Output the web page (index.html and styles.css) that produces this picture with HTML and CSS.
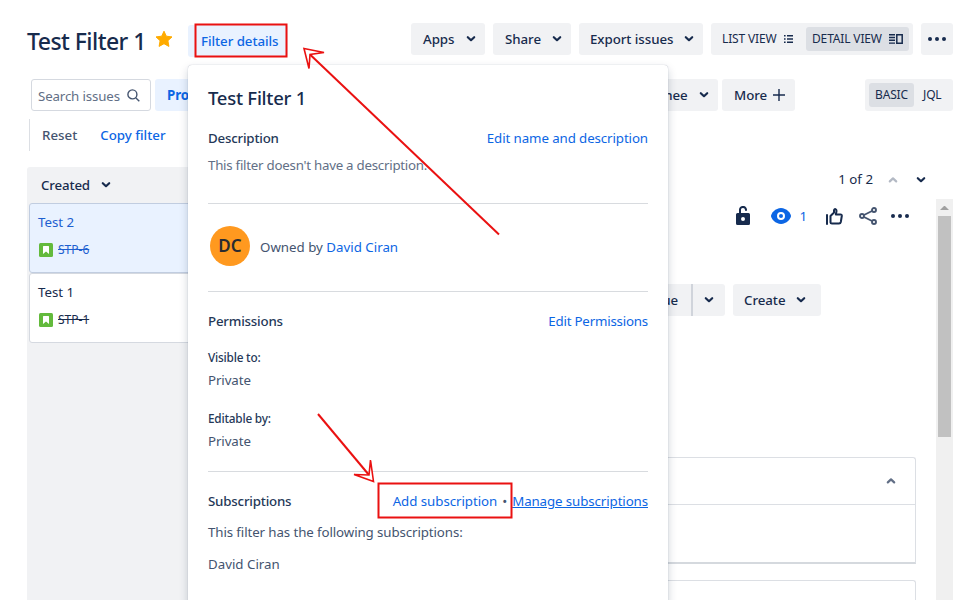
FILE: index.html
```
<!DOCTYPE html>
<html lang="en">
<head>
  <title>Test Filter 1</title>
  <meta charset="UTF-8">
  <link rel="stylesheet" href="styles.css">
</head>
<body>
  <svg class="defs">
    <symbol id="down" viewBox="0 0 10 8"><path d="M1.8 2.2 5 5.2 8.2 2.2" fill="none" stroke="currentColor" stroke-width="2.2" stroke-linecap="round" stroke-linejoin="round"/></symbol>
    <symbol id="up" viewBox="0 0 10 8"><path d="M1.8 5.4 5 2.4 8.2 5.4" fill="none" stroke="currentColor" stroke-width="2.2" stroke-linecap="round" stroke-linejoin="round"/></symbol>
    <symbol id="dots" viewBox="0 0 18 4"><circle cx="2" cy="2" r="2" fill="currentColor"/><circle cx="9" cy="2" r="2" fill="currentColor"/><circle cx="16" cy="2" r="2" fill="currentColor"/></symbol>
    <symbol id="story" viewBox="0 0 14 14"><rect width="14" height="14" rx="1.5" fill="#63ba3c"/><path d="M4 3.6Q4 3 4.6 3H9.4Q10 3 10 3.6V11L7 8.4 4 11Z" fill="#fff"/></symbol>
  </svg>

  <header class="header">
    <h1>Test Filter 1</h1>
    <svg class="star" viewBox="0 0 18 18"><path d="M9 1.2 11.3 6.2 17 6.9 12.9 10.7 13.9 16.4 9 13.7 4.1 16.4 5.1 10.7 1 6.9 6.7 6.2Z" fill="#ffab00" stroke="#ffab00" stroke-linejoin="round"/></svg>
    <div class="details">
      <button class="btn details-btn">Filter details</button>
      <section class="popup">
        <h2>Test Filter 1</h2>
        <div class="row"><h3>Description</h3><a>Edit name and description</a></div>
        <p class="empty">This filter doesn't have a description.</p>
        <hr>
        <div class="owner">
          <span class="avatar">DC</span>
          <p>Owned by <a>David Ciran</a></p>
        </div>
        <hr>
        <div class="row permissions"><h3>Permissions</h3><a class="edit-permissions">Edit Permissions</a></div>
        <h4>Visible to:</h4>
        <p class="value">Private</p>
        <h4>Editable by:</h4>
        <p class="value">Private</p>
        <hr>
        <div class="row subscriptions">
          <h3>Subscriptions</h3>
          <div class="links"><a class="add">Add subscription</a><span>•</span><a class="manage">Manage subscriptions</a></div>
        </div>
        <p class="following">This filter has the following subscriptions:</p>
        <p class="subscriber">David Ciran</p>
      </section>
    </div>
    <div class="actions">
      <button class="btn apps">Apps<svg class="chev"><use href="#down"/></svg></button>
      <button class="btn share">Share<svg class="chev"><use href="#down"/></svg></button>
      <button class="btn export">Export issues<svg class="chev"><use href="#down"/></svg></button>
      <div class="toggle view-toggle">
        <span class="list-view">LIST VIEW
          <svg width="10" height="10" viewBox="0 0 10 10" fill="currentColor"><path d="M0 1h1.6v1.5H0zM3 1h6v1.5H3zM0 4.3h1.6v1.5H0zM3 4.3h6v1.5H3zM0 7.6h1.6v1.5H0zM3 7.6h6v1.5H3z"/></svg>
        </span>
        <span class="selected detail-view">DETAIL VIEW
          <svg width="14" height="10" viewBox="0 0 14 10" fill="currentColor"><path d="M0 0h6v1.4H0zM0 2.8h6v1.4H0zM0 5.6h6V7H0zM0 8.4h6v1.4H0z"/><path d="M7.8.8h5.4v8.4H7.8z" fill="none" stroke="currentColor" stroke-width="1.5"/></svg>
        </span>
      </div>
      <button class="btn more-actions"><svg width="18" height="4"><use href="#dots"/></svg></button>
    </div>
  </header>

  <div class="filters">
    <div class="search">Search issues
      <svg width="13" height="13" viewBox="0 0 13 13" fill="none" stroke="#44546f" stroke-width="1.4"><circle cx="5.4" cy="5.4" r="4.5"/><path d="m8.7 8.7 3.6 3.6"/></svg>
    </div>
    <button class="btn project">Project</button>
    <button class="btn assignee">Assignee<svg class="chev"><use href="#down"/></svg></button>
    <button class="btn more">More<svg width="12" height="12" viewBox="0 0 12 12" stroke="currentColor" stroke-width="1.4"><path d="M6 0v12M0 6h12"/></svg></button>
    <div class="toggle mode-toggle"><span class="selected">BASIC</span><span class="jql">JQL</span></div>
  </div>
  <div class="filter-links"><span>Reset</span><a>Copy filter</a></div>

  <main>
    <aside class="issues">
      <div class="sort">Created<svg class="chev"><use href="#down"/></svg></div>
      <div class="issue active">
        <p>Test 2</p>
        <div class="key"><svg width="14" height="14"><use href="#story"/></svg><s>STP-6</s></div>
      </div>
      <div class="issue">
        <p>Test 1</p>
        <div class="key"><svg width="14" height="14"><use href="#story"/></svg><s>STP-1</s></div>
      </div>
    </aside>
    <section class="detail">
      <div class="pager"><span>1 of 2</span><svg class="chev prev"><use href="#up"/></svg><svg class="chev"><use href="#down"/></svg></div>
      <div class="scroll">
        <div class="content">
          <div class="tools">
            <svg class="lock" width="14" height="19" viewBox="0 0 14 19"><path d="M4 8V4.200a3 3 0 0 1 6-.6V4.800" fill="none" stroke="currentColor" stroke-width="2"/><path fill="currentColor" fill-rule="evenodd" d="M1.5 7h11Q14 7 14 8.500V17.500Q14 19 12.500 19H1.500Q0 19 0 17.500V8.500Q0 7 1.500 7ZM7 11a2 2 0 1 0 0 4 2 2 0 0 0 0-4Z"/></svg>
            <svg class="eye" width="20" height="16" viewBox="0 0 20 16"><path d="M10 0C4.500 0 0 5.500 0 8s4.500 8 10 8 10-5.500 10-8-4.500-8-10-8Z" fill="#0c66e4"/><circle cx="10" cy="8" r="3" fill="none" stroke="#fff" stroke-width="2"/></svg>
            <span class="watchers">1</span>
            <svg class="like" width="17" height="17" viewBox="0 0 17 17" fill="none" stroke="currentColor" stroke-width="2" stroke-linejoin="round"><path d="M1 7v9" stroke-linecap="round"/><path d="M4.500 14.500V8L8 4.500V2.200Q8.300.8 9.500 1.200 10.800 1.700 10.400 3.700L9.800 6.500H14.500Q16 6.500 15.800 8L14.800 14Q14.500 15.500 13 15.500H6Q4.500 15.500 4.500 14.500Z"/></svg>
            <svg class="share-icon" width="18" height="18" viewBox="0 0 18 18" fill="none" stroke="#44546f" stroke-width="1.900"><circle cx="3" cy="9" r="2"/><circle cx="15" cy="3" r="2"/><circle cx="15" cy="15" r="2"/><path d="m5 8 8-4M5 10l8 4"/></svg>
            <svg width="18" height="4"><use href="#dots"/></svg>
          </div>
          <div class="issue-actions">
            <button class="btn link-issue">Link issue</button>
            <button class="btn split"><svg class="chev"><use href="#down"/></svg></button>
            <button class="btn create">Create<svg class="chev"><use href="#down"/></svg></button>
          </div>
          <div class="panel"><div class="panel-head"><svg class="chev"><use href="#up"/></svg></div></div>
          <div class="panel"></div>
        </div>
        <div class="scrollbar"><i class="arrow"></i><i class="thumb"></i></div>
      </div>
    </section>
  </main>

  <svg class="marks" width="965" height="600" viewBox="0 0 965 600">
    <rect x="195.500" y="24.500" width="91" height="32"/>
    <rect x="378.500" y="483.500" width="133" height="34"/>
    <path d="M499 234.500 310 54.500"/>
    <path class="head" d="M304 48.500 324 52.500 310 54.500 309 68.500Z"/>
    <path d="M318 414 369 475"/>
    <path class="head" d="M373.500 481.500 354 474.500 369 475 370.500 460Z"/>
  </svg>
</body>
</html>
```

FILE: styles.css
```
* {
  box-sizing: border-box;
}
body {
  margin: 0;
  width: 965px;
  height: 600px;
  overflow: hidden;
  position: relative;
  background: #fff;
  font-family: "Noto Sans", "Open Sans", sans-serif;
  font-size: 13.3px;
  line-height: 20px;
  color: #172b4d;
}
h1, h2, h3, h4, p {
  margin: 0;
  font-weight: 500;
}
p {
  font-weight: 400;
}
a {
  color: #0c66e4;
}
svg {
  display: block;
  flex: none;
}
.defs {
  display: none;
}
.chev {
  width: 10px;
  height: 8px;
}
.btn {
  display: flex;
  align-items: center;
  justify-content: space-between;
  height: 32px;
  padding: 0 9px 0 12px;
  border: 0;
  border-radius: 3px;
  background: #f1f2f4;
  color: #172b4d;
  font: inherit;
  font-weight: 500;
  letter-spacing: -0.05px;
  white-space: nowrap;
}

/* header */
.header {
  display: flex;
  height: 79px;
  padding: 23px 12px 0 27px;
}
h1 {
  width: 128px;
  font-size: 23px;
  line-height: 36px;
  letter-spacing: -0.55px;
  white-space: nowrap;
}
.star {
  width: 18px;
  height: 18px;
  margin-top: 7px;
}
.details {
  position: relative;
  margin: 2px 0 0 15px;
}
.details-btn {
  width: 100px;
  padding-left: 13px;
  background: #e9f2ff;
  color: #0c66e4;
}
.actions {
  display: flex;
  gap: 8px;
  margin-left: auto;
}
.apps {
  width: 74px;
}
.share {
  width: 78px;
}
.export {
  width: 124px;
  padding-left: 11px;
}
.more-actions {
  width: 32px;
  padding: 0 7px;
}
.toggle {
  display: flex;
  align-items: center;
  height: 32px;
  padding: 4px;
  border-radius: 3px;
  background: #f1f2f4;
  font-size: 12px;
  letter-spacing: -0.15px;
}
.toggle span {
  display: flex;
  align-items: center;
  justify-content: space-between;
  height: 24px;
  padding: 0 6px;
  border-radius: 3px;
  white-space: nowrap;
}
.toggle .selected {
  background: #dcdfe4;
}
.view-toggle {
  width: 202px;
}
.view-toggle .list-view {
  width: 91px;
  padding: 0 12px 0 7px;
}
.view-toggle .detail-view {
  width: 103px;
}

/* filters */
.filters {
  display: flex;
  gap: 4px;
  padding: 0 12px 0 31px;
}
.search {
  display: flex;
  align-items: center;
  justify-content: space-between;
  width: 120px;
  height: 32px;
  padding: 2px 10px 0 6px;
  border: 1px solid #d5d9e0;
  border-radius: 3px;
  color: #626f86;
  letter-spacing: -0.15px;
  white-space: nowrap;
}
.search svg {
  margin-top: -2px;
}
.project {
  width: 50px;
  overflow: hidden;
  background: #e9f2ff;
  color: #0c66e4;
  font-weight: 700;
}
.assignee {
  width: 99px;
  margin-left: auto;
}
.more {
  width: 73px;
  padding-right: 10px;
}
.mode-toggle {
  width: 88px;
  margin-left: 66px;
}
.mode-toggle .selected {
  width: 45px;
}
.mode-toggle .jql {
  padding: 0 0 0 9px;
}
.filter-links {
  display: flex;
  align-items: center;
  gap: 23px;
  height: 32px;
  margin: 8px 0 16px 29px;
  padding-left: 12px;
  border-left: 1px solid #dcdfe4;
  font-weight: 500;
}
.filter-links span {
  color: #44546f;
}

/* issue list */
main {
  display: flex;
  height: 433px;
}
.issues {
  width: 300px;
  margin-left: 27px;
  padding-left: 2px;
  border-radius: 3px 0 0;
  background: #f1f2f4;
}
.sort {
  display: flex;
  align-items: center;
  gap: 11px;
  height: 36px;
  padding-left: 12px;
  font-weight: 500;
  letter-spacing: -0.15px;
}
.issue {
  height: 70px;
  padding: 8px;
  border: 1px solid #d5d9e0;
  border-radius: 3px;
  background: #fff;
}
.issue.active {
  border-color: #c1cde0;
  background: #e9f2ff;
  color: #1d5fd0;
}
.key {
  display: flex;
  align-items: center;
  gap: 5px;
  height: 20px;
  margin-top: 8px;
  padding-left: 1px;
  font-size: 12px;
}

/* issue detail */
.detail {
  flex: 1;
}
.pager {
  display: flex;
  align-items: center;
  justify-content: flex-end;
  gap: 18px;
  height: 25px;
  margin-bottom: 7px;
  padding-right: 39px;
}
.pager .prev {
  color: #b3b9c4;
}
.pager span {
  margin: -2px -3px 0 0;
}
.scroll {
  display: flex;
  height: 401px;
  overflow: hidden;
}
.content {
  flex: 1;
  margin-right: 20px;
}
.tools {
  display: flex;
  align-items: center;
  justify-content: flex-end;
  height: 34px;
  padding-right: 7px;
}
.lock {
  margin-top: -1px;
}
.eye {
  margin-left: 21px;
}
.watchers {
  margin: 0 19px 0 8px;
  color: #0c66e4;
}
.share-icon {
  margin: 0 14px 0 16px;
}
.issue-actions {
  display: flex;
  height: 32px;
  margin: 51px 95px 141px 0;
  justify-content: flex-end;
}
.link-issue {
  padding-right: 13px;
  border-radius: 3px 0 0 3px;
}
.split {
  width: 34px;
  margin-right: 8px;
  padding: 0 11px;
  border-left: 2px solid #d0d4db;
  border-radius: 0 3px 3px 0;
}
.create {
  width: 88px;
  padding: 0 15px 0 11px;
}
.panel {
  height: 107px;
  margin-bottom: 16px;
  border: 1px solid #dcdfe4;
  border-bottom: 2px solid #d5d9de;
  border-radius: 3px 3px 0 0;
}
.panel-head {
  display: flex;
  align-items: center;
  justify-content: flex-end;
  height: 47px;
  padding-right: 19px;
  border-bottom: 1px solid #dcdfe4;
  color: #626f86;
}
.scrollbar {
  width: 17px;
  margin-right: 12px;
  background: #f0f0f0;
}
.arrow {
  display: block;
  margin: 7px 4px 6px;
  border: 4px solid transparent;
  border-top: 0;
  border-bottom-color: #a0a0a0;
}
.thumb {
  display: block;
  width: 13px;
  height: 221px;
  margin: 0 2px;
  background: #c1c1c1;
}

/* filter details popup */
.popup {
  position: absolute;
  z-index: 1;
  top: 40px;
  left: 0;
  width: 480px;
  height: 560px;
  padding: 21px 20px 0;
  border-radius: 4px;
  background: #fff;
  box-shadow: 0 4px 10px rgba(9, 30, 66, 0.2), 0 0 1px rgba(9, 30, 66, 0.35);
  color: #44546f;
  letter-spacing: -0.1px;
  white-space: nowrap;
}
h2 {
  font-size: 18.5px;
  line-height: 24px;
  letter-spacing: -0.25px;
  color: #172b4d;
}
h3, h4 {
  font-size: 13.3px;
  letter-spacing: -0.2px;
  color: #253858;
}
h4 {
  font-size: 11.8px;
}
.row {
  display: flex;
  justify-content: space-between;
  margin-top: 18px;
}
.empty {
  margin: 7px 0 28px;
  color: #626f86;
  letter-spacing: -0.25px;
}
hr {
  height: 1px;
  margin: 0;
  border: 0;
  background: #d8dbdf;
}
.owner {
  display: flex;
  align-items: center;
  gap: 10px;
  height: 87px;
  padding: 0 0 3px 2px;
  letter-spacing: 0;
}
.owner p {
  margin-top: 2px;
}
.avatar {
  width: 40px;
  height: 40px;
  border-radius: 50%;
  background: #ff991f;
  color: #292b31;
  font-size: 17px;
  font-weight: 600;
  line-height: 39px;
  text-align: center;
}
.permissions {
  margin: 19px 0 16px;
}
.edit-permissions {
  letter-spacing: -0.2px;
}
.value {
  margin: 3px 0 18px;
}
.value + hr {
  margin-top: 20px;
}
.subscriptions {
  margin: 19px 0 11px;
}
.links {
  display: flex;
  gap: 5px;
}
.add {
  letter-spacing: -0.05px;
}
.manage {
  text-decoration: underline;
}
.following {
  margin-bottom: 12px;
}
.subscriber {
  letter-spacing: 0;
}

/* highlight boxes and arrows */
.marks {
  position: absolute;
  z-index: 2;
  top: 0;
  left: 0;
  fill: none;
  stroke: #ea1111;
  stroke-width: 2;
}
.marks .head {
  fill: #fff;
  stroke-width: 1.600;
}
```
